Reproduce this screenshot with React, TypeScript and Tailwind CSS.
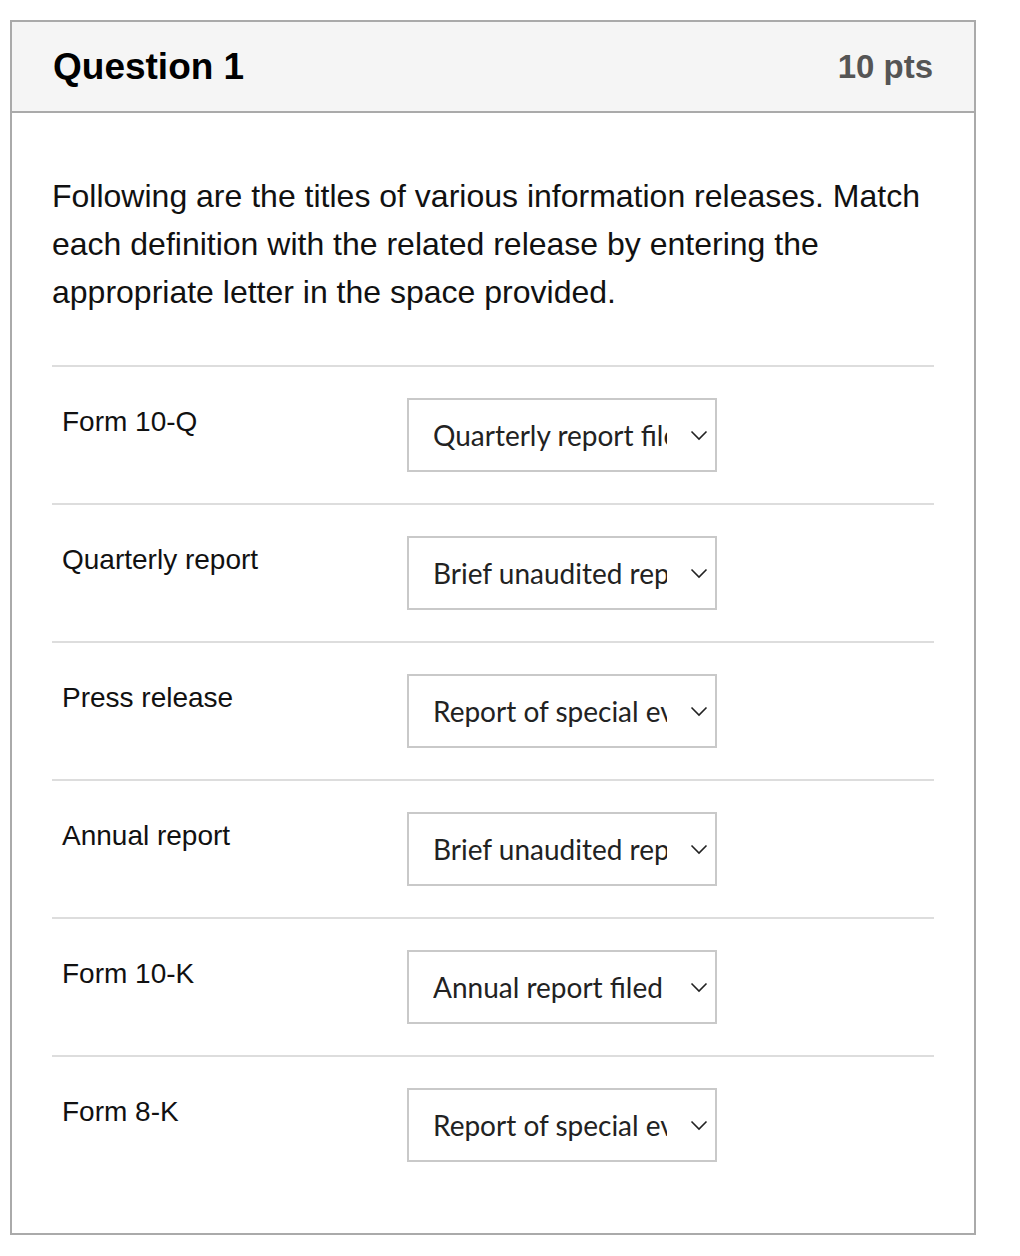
import React from 'react';

interface MatchRow {
    label: string;
    answer: string;
}

// left column = release title, right column = chosen definition
const rows: MatchRow[] = [
    { label: 'Form 10-Q', answer: 'Quarterly report filed with the SEC' },
    { label: 'Quarterly report', answer: 'Brief unaudited report for a quarter' },
    { label: 'Press release', answer: 'Report of special events' },
    { label: 'Annual report', answer: 'Brief unaudited report for a quarter' },
    { label: 'Form 10-K', answer: 'Annual report filed with the SEC' },
    { label: 'Form 8-K', answer: 'Report of special events' },
];

const Chevron = () => (
    <svg width="18" height="11" viewBox="0 0 18 11" fill="none">
        <polyline points="1.5,1.5 9,9 16.5,1.5" stroke="#222" strokeWidth="1.6" />
    </svg>
);

// looks like a closed native select, value cut off before the arrow
const AnswerSelect = ({ value }: { value: string }) => (
    <div className="flex h-[74px] w-[310px] items-center border-2 border-[#c9c9c9] bg-white pl-[24px] pr-[7px]">
        <span className="w-[234px] overflow-hidden whitespace-nowrap font-['Lato',sans-serif] text-[28px] text-[#222]">
            {value}
        </span>
        <div className="ml-auto flex w-[18px] items-center">
            <Chevron />
        </div>
    </div>
);

export default function App() {
    return (
        <div className="min-h-[1256px] bg-white pt-[20px] pl-[10px] font-['Liberation_Sans',Arial,sans-serif]">
            <div className="w-[966px] border-2 border-[#aaaaaa]">
                {/* Header */}
                <div className="flex h-[91px] items-center justify-between border-b-2 border-[#aaaaaa] bg-[#f5f5f5] pl-[41px] pr-[41px]">
                    <h2 className="text-[37px] font-bold text-black">Question 1</h2>
                    <span className="text-[33px] font-bold text-[#555555]">10 pts</span>
                </div>

                {/* Body */}
                <div className="px-[40px] pt-[59px] pb-[40px]">
                    <p className="text-[32px] leading-[48px] text-[#111]">
                        Following are the titles of various information releases. Match each definition with the related release by entering the appropriate letter in the space provided.
                    </p>

                    <div className="mt-[49px]">
                        {rows.map((row, i) => (
                            <div key={i} className="flex border-t-2 border-[#dddddd] py-[31px]">
                                <div className="w-[355px] pl-[10px] pt-[3px] text-[28px] leading-[42px] text-[#111]">
                                    {row.label}
                                </div>
                                <AnswerSelect value={row.answer} />
                            </div>
                        ))}
                    </div>
                </div>
            </div>
        </div>
    );
}
